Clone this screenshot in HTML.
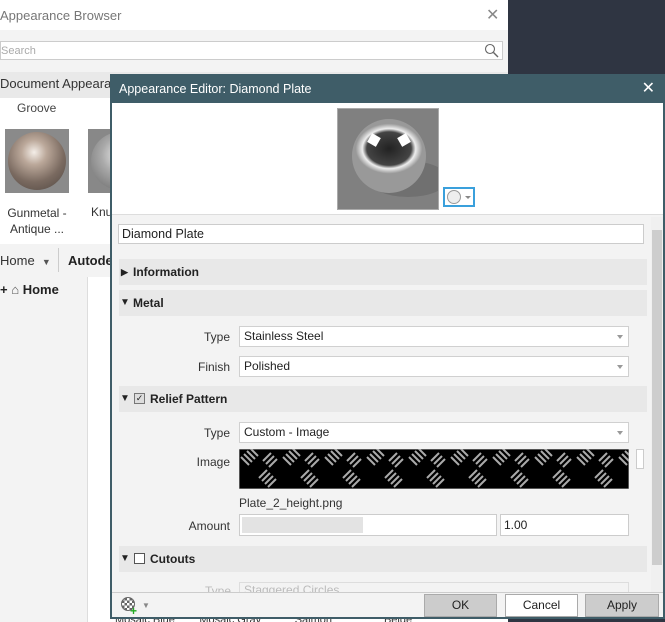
<!DOCTYPE html><html><head><style>
*{margin:0;padding:0;box-sizing:border-box}
html,body{width:665px;height:622px;overflow:hidden}
body{background:#2f3542;font-family:"Liberation Sans",sans-serif;font-size:12px;color:#222;position:relative}
.a{position:absolute}
.hdr{position:absolute;left:119px;width:528px;height:26px;background:#e8e8e8;font-weight:bold;font-size:12px;line-height:26px;padding-left:14px}
.lbl{position:absolute;width:120px;text-align:right;left:110px;color:#333}
.sel{position:absolute;left:239px;width:390px;height:21px;background:#fff;border:1px solid #d0d0d0;padding-left:4px;line-height:19px}
.sel:after{content:"";position:absolute;right:5px;top:8px;border:3px solid transparent;border-top:4px solid #999}
.btn{position:absolute;top:594px;height:23px;border:1px solid #aaa;text-align:center;line-height:21px;font-size:12px}
</style></head><body>
<div class="a" style="left:0;top:0;width:508px;height:622px;background:#f3f3f3"></div>
<div class="a" style="left:0;top:0;width:508px;height:30px;background:#fff;color:#777;font-size:13px;line-height:32px">Appearance Browser<span style="position:absolute;left:486px;top:0;font-size:16px;color:#888">✕</span></div>
<div class="a" style="left:0;top:41px;width:503px;height:19px;background:#fff;border:1px solid #ccc;color:#aaa;font-size:11px;line-height:18px">Search<svg style="position:absolute;right:3px;top:1px" width="15" height="15"><circle cx="6" cy="6" r="4.5" fill="none" stroke="#666" stroke-width="1.1"/><path d="M9.5 9.5L14 14" stroke="#666" stroke-width="1.4"/></svg></div>
<div class="a" style="left:0;top:72px;width:508px;height:26px;background:#e9e9e9"></div>
<div class="a" style="left:0;top:76px;font-size:13px;color:#333">Document Appearances</div>
<div class="a" style="left:0;top:98px;width:508px;height:146px;background:#fff"></div>
<div class="a" style="left:17px;top:101px;font-size:12px;color:#444">Groove</div>
<div class="a" style="left:5px;top:129px;width:64px;height:64px;background:#8a8a8a"><div class="a" style="left:3px;top:3px;width:58px;height:58px;border-radius:50%;background:radial-gradient(circle at 45% 35%,#f4eee8 0,#bba89a 25%,#7a6a60 60%,#4e4540 100%)"></div></div>
<div class="a" style="left:88px;top:129px;width:22px;height:64px;background:#888"><div class="a" style="left:3px;top:3px;width:58px;height:58px;border-radius:50%;background:radial-gradient(circle at 50% 40%,#eee 0,#aaa 40%,#666 100%)"></div></div>
<div class="a" style="left:6px;top:205px;font-size:12px;color:#333;text-align:center;width:62px;line-height:16px">Gunmetal - Antique ...</div>
<div class="a" style="left:91px;top:205px;font-size:12px;color:#333">Knu</div>
<div class="a" style="left:0;top:253px;font-size:13px;color:#333">Home&nbsp;&nbsp;<span style="font-size:9px;color:#555">▼</span></div>
<div class="a" style="left:58px;top:248px;width:1px;height:24px;background:#ccc"></div>
<div class="a" style="left:68px;top:253px;font-size:13px;font-weight:bold;color:#222">Autodesk</div>
<div class="a" style="left:0;top:282px;font-size:13px;font-weight:bold;color:#222">+ <span style="font-weight:normal;color:#555">⌂</span> Home</div>
<div class="a" style="left:87px;top:277px;width:1px;height:345px;background:#ddd"></div>
<div class="a" style="left:88px;top:277px;width:420px;height:345px;background:#fff"></div>
<div class="a" style="left:115px;top:614px;font-size:11px;color:#333;white-space:nowrap">Mosaic Blue&nbsp;&nbsp;&nbsp;&nbsp;&nbsp;&nbsp;&nbsp;&nbsp;Mosaic Gray&nbsp;&nbsp;&nbsp;&nbsp;&nbsp;&nbsp;&nbsp;&nbsp;&nbsp;&nbsp;&nbsp;Salmon&nbsp;&nbsp;&nbsp;&nbsp;&nbsp;&nbsp;&nbsp;&nbsp;&nbsp;&nbsp;&nbsp;&nbsp;&nbsp;&nbsp;&nbsp;&nbsp;&nbsp;Beige</div>

<div class="a" style="left:110px;top:74px;width:555px;height:545px;background:#f3f3f3;border:2px solid #3f5d68;border-top:none"></div>
<div class="a" style="left:110px;top:74px;width:555px;height:29px;background:#3f5d68;color:#fff;font-size:12.5px;line-height:30px;padding-left:9px">Appearance Editor: Diamond Plate<span style="position:absolute;right:10px;top:0;font-size:16px">✕</span></div>
<div class="a" style="left:112px;top:103px;width:551px;height:112px;background:#fff;border-bottom:1px solid #ddd"></div>
<div class="a" style="left:337px;top:108px;width:102px;height:102px;background:#808080;border:1px solid #aaa;overflow:hidden">
<div class="a" style="left:30px;top:52px;width:80px;height:36px;border-radius:50%;background:#707070"></div>
<div class="a" style="left:14px;top:10px;width:74px;height:74px;border-radius:50%;background:radial-gradient(ellipse 60% 45% at 50% 40%,#222 0,#444 50%,#eee 60%,#999 75%),#aaa"></div>
<div class="a" style="left:31px;top:26px;width:10px;height:10px;background:#fff;transform:rotate(30deg)"></div>
<div class="a" style="left:61px;top:26px;width:10px;height:10px;background:#fff;transform:rotate(-30deg)"></div></div>
<div class="a" style="left:443px;top:187px;width:32px;height:20px;border:2px solid #3aa0dc;background:#fff"><div class="a" style="left:2px;top:1px;width:14px;height:14px;border-radius:50%;border:1px solid #999;background:#eee"></div><div class="a" style="left:20px;top:7px;border:3px solid transparent;border-top:3px solid #888"></div></div>
<div class="a" style="left:118px;top:224px;width:526px;height:20px;background:#fff;border:1px solid #ccc;font-size:12.5px;line-height:18px;padding-left:3px">Diamond Plate</div>
<div class="a" style="left:651px;top:217px;width:12px;height:375px;background:#f0f0f0"><div class="a" style="left:1px;top:13px;width:10px;height:335px;background:#cdcdcd"></div></div>
<div class="hdr" style="top:259px">Information<span style="position:absolute;left:2px;font-size:9px">▶</span></div>
<div class="hdr" style="top:290px">Metal<span style="position:absolute;left:1px;font-size:10px">▼</span></div>
<div class="lbl" style="top:330px">Type</div><div class="sel" style="top:326px">Stainless Steel</div>
<div class="lbl" style="top:360px">Finish</div><div class="sel" style="top:356px">Polished</div>
<div class="hdr" style="top:386px;padding-left:31px">Relief Pattern<span style="position:absolute;left:1px;font-size:10px">▼</span><span style="position:absolute;left:15px;top:7px;width:11px;height:11px;border:1px solid #777;background:#ddd;font-size:9px;line-height:9px;text-align:center;font-weight:normal">✓</span></div>
<div class="lbl" style="top:426px">Type</div><div class="sel" style="top:422px">Custom - Image</div>
<div class="lbl" style="top:455px">Image</div>
<svg class="a" style="left:239px;top:449px" width="390" height="40"><defs><pattern id="p" width="42" height="40" patternUnits="userSpaceOnUse"><rect width="42" height="40" fill="#000"/><g stroke="#aaa" stroke-width="2"><path d="M2 8l8 8M5 5l8 8M8 2l8 8M11 -1l8 8"/><path d="M23 32l8 -8M26 35l8 -8M29 38l8 -8M20 29l8 -8"/><path d="M24 12l8 -8M27 15l8 -8M30 18l8-8"/></g></pattern></defs><rect width="390" height="40" fill="url(#p)" stroke="#aaa"/></svg>
<div class="a" style="left:636px;top:449px;width:8px;height:20px;background:#fff;border:1px solid #ccc"></div>
<div class="a" style="left:239px;top:496px;color:#333">Plate_2_height.png</div>
<div class="lbl" style="top:519px">Amount</div>
<div class="a" style="left:239px;top:514px;width:258px;height:22px;background:#fff;border:1px solid #ccc"><div style="margin:2px;width:121px;height:16px;background:#e3e3e3"></div></div>
<div class="a" style="left:500px;top:514px;width:129px;height:22px;background:#fff;border:1px solid #ccc;padding-left:3px;line-height:20px">1.00</div>
<div class="hdr" style="top:546px;padding-left:31px">Cutouts<span style="position:absolute;left:1px;font-size:10px">▼</span><span style="position:absolute;left:15px;top:7px;width:11px;height:11px;border:1px solid #555;background:#fff"></span></div>
<div class="a" style="left:112px;top:580px;width:539px;height:12px;overflow:hidden;color:#bbb"><span style="position:absolute;left:93px;top:4px">Type</span><div class="a" style="left:127px;top:2px;width:390px;height:20px;border:1px solid #ddd;padding-left:4px">Staggered Circles</div></div>
<div class="a" style="left:112px;top:592px;width:551px;height:1px;background:#ccc"></div>
<div class="a" style="left:121px;top:597px;width:14px;height:14px;border-radius:50%;border:1px solid #666;background:repeating-conic-gradient(#666 0 25%,#fff 0 50%) 0 0/5px 5px"></div>
<div class="a" style="left:130px;top:604px;color:#2a2;font-weight:bold;font-size:12px">+</div>
<div class="a" style="left:142px;top:601px;font-size:8px;color:#888">▼</div>
<div class="btn" style="left:424px;width:73px;background:#ccc">OK</div>
<div class="btn" style="left:505px;width:73px;background:#fff">Cancel</div>
<div class="btn" style="left:585px;width:74px;background:#ccc">Apply</div>
</body></html>
